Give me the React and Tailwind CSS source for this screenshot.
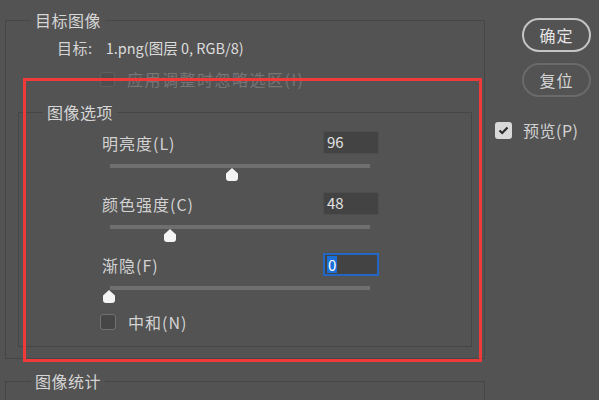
import React from 'react';

const font = { fontFamily: '"Noto Sans CJK SC", "Noto Sans", sans-serif' };

const Thumb = ({ pos }) => (
  <svg
    width="12"
    height="13"
    viewBox="0 0 12 13"
    className="absolute top-0"
    style={{ left: `${pos - 6}px` }}
  >
    <path d="M6 0 L12 5.5 V10 Q12 13 9 13 H3 Q0 13 0 10 V5.5 Z" fill="#f4f4f4" />
  </svg>
);

const SliderRow = ({ label, value, pos, focused }) => (
  <div className="w-[277px] mb-[11px]">
    <div className="flex items-center justify-between h-[23px]">
      <span className="text-[16px] tracking-[1px] text-[#d2d2d2] leading-[20px]">{label}</span>
      {focused ? (
        <div className="w-[56px] h-[23px] bg-[#434343] border-2 border-[#2366c4] flex items-center pl-[2px]">
          <span className="bg-[#1b6fd8] text-white text-[15px] leading-[17px] px-[1px]">{value}</span>
        </div>
      ) : (
        <div className="w-[56px] h-[23px] bg-[#434343] border border-[#4e4e4e] flex items-center pl-[3px] text-[15px] text-[#e2e2e2]">
          {value}
        </div>
      )}
    </div>
    <div className="ml-[8px] mt-[10px] w-[260px] h-[4px] bg-[#6f6f6f]" />
    <div className="relative ml-[8px] h-[13px]">
      <Thumb pos={pos} />
    </div>
  </div>
);

export default function App() {
  return (
    <div className="relative w-[599px] h-[400px] overflow-hidden bg-[#535353] flex" style={font}>
      {/* left column */}
      <div className="w-[485px] pl-[5px] pt-[10px] shrink-0">
        <fieldset className="border border-[#464646] pb-[11px]">
          <legend className="ml-[25px] px-[4px] text-[16px] tracking-[0.5px] leading-[20px] text-[#d6d6d6]">目标图像</legend>
          <div className="mt-[8px] ml-[51px] h-[20px] flex items-center text-[15px] text-[#d4d4d4]">
            <span className="tracking-[0.5px]">目标:</span>
            <span className="ml-[13px] text-[14.5px] text-[#dcdcdc]">1.png(图层 0, RGB/8)</span>
          </div>
          <div className="mt-[12px] ml-[94px] h-[18px] flex items-center">
            <div className="w-[15px] h-[15px] rounded-[3px] border border-[#606060] bg-[#4e4e4e]" />
            <span className="ml-[12px] text-[16px] tracking-[1.5px] text-[#767676]">应用调整时忽略选区(I)</span>
          </div>

          <fieldset className="mt-[14px] mx-[12px] border border-[#464646] pb-[16px]">
            <legend className="ml-[24px] px-[4px] text-[16px] tracking-[0.5px] leading-[20px] text-[#d6d6d6]">图像选项</legend>
            <div className="ml-[83px] mt-[9px]">
              <SliderRow label="明亮度(L)" value="96" pos={122} />
              <SliderRow label="颜色强度(C)" value="48" pos={60} />
              <SliderRow label="渐隐(F)" value="0" pos={-1} focused />
              <div className="mt-[7px] -ml-[2px] h-[16px] flex items-center">
                <div className="w-[16px] h-[16px] rounded-[3px] border border-[#717171] bg-[#464646]" />
                <span className="ml-[12px] text-[16px] tracking-[1px] text-[#d2d2d2]">中和(N)</span>
              </div>
            </div>
          </fieldset>
        </fieldset>

        <fieldset className="mt-[12px] border border-[#464646] h-[60px]">
          <legend className="ml-[25px] px-[4px] text-[16px] tracking-[0.5px] leading-[20px] text-[#d6d6d6]">图像统计</legend>
        </fieldset>
      </div>

      {/* right column */}
      <div className="flex flex-col pt-[18px]">
        <button className="ml-[37px] w-[69px] h-[34px] rounded-full border-2 border-[#c4c4c4] text-[16px] tracking-[1px] text-[#e4e4e4]">
          确定
        </button>
        <button className="ml-[37px] mt-[11px] w-[69px] h-[34px] rounded-full border-2 border-[#6a6a6a] text-[16px] tracking-[1px] text-[#d6d6d6]">
          复位
        </button>
        <div className="ml-[10px] mt-[21px] flex items-center">
          <div className="w-[17px] h-[17px] rounded-[3px] bg-[#d9d9d9] flex items-center justify-center">
            <svg width="11" height="9" viewBox="0 0 11 9">
              <path d="M1.5 4.5 L4.2 7 L9.5 1.5" stroke="#2e2e2e" strokeWidth="2.2" fill="none" />
            </svg>
          </div>
          <span className="ml-[11px] text-[16px] tracking-[0.5px] text-[#d2d2d2]">预览(P)</span>
        </div>
      </div>

      {/* annotation */}
      <div className="absolute left-[23px] top-[78px] w-[459px] h-[284px] border-[3px] border-[#f03a3a] pointer-events-none" />
    </div>
  );
}
